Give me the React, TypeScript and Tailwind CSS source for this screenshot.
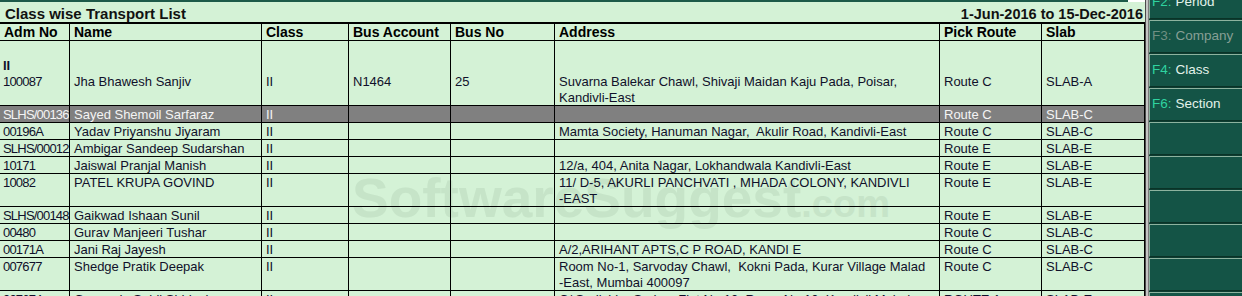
import type { ReactNode } from "react";

type Row = {
  adm: string;
  name: string;
  cls: string;
  account?: string;
  bus?: string;
  address?: string[];
  route: string;
  slab: string;
  selected?: boolean;
  group?: string;
};

const rows: Row[] = [
  {
    group: "II",
    adm: "100087",
    name: "Jha Bhawesh Sanjiv",
    cls: "II",
    account: "N1464",
    bus: "25",
    address: ["Suvarna Balekar Chawl, Shivaji Maidan Kaju Pada, Poisar,", "Kandivli-East"],
    route: "Route C",
    slab: "SLAB-A",
  },
  { adm: "SLHS/00136", name: "Sayed Shemoil Sarfaraz", cls: "II", route: "Route C", slab: "SLAB-C", selected: true },
  {
    adm: "00196A",
    name: "Yadav Priyanshu Jiyaram",
    cls: "II",
    address: ["Mamta Society, Hanuman Nagar,  Akulir Road, Kandivli-East"],
    route: "Route C",
    slab: "SLAB-C",
  },
  { adm: "SLHS/00012", name: "Ambigar Sandeep Sudarshan", cls: "II", route: "Route E", slab: "SLAB-E" },
  {
    adm: "10171",
    name: "Jaiswal Pranjal Manish",
    cls: "II",
    address: ["12/a, 404, Anita Nagar, Lokhandwala Kandivli-East"],
    route: "Route E",
    slab: "SLAB-E",
  },
  {
    adm: "10082",
    name: "PATEL KRUPA GOVIND",
    cls: "II",
    address: ["11/ D-5, AKURLI PANCHVATI , MHADA COLONY, KANDIVLI", "-EAST"],
    route: "Route E",
    slab: "SLAB-E",
  },
  { adm: "SLHS/00148", name: "Gaikwad Ishaan Sunil", cls: "II", route: "Route E", slab: "SLAB-E" },
  { adm: "00480", name: "Gurav Manjeeri Tushar", cls: "II", route: "Route C", slab: "SLAB-C" },
  {
    adm: "00171A",
    name: "Jani Raj Jayesh",
    cls: "II",
    address: ["A/2,ARIHANT APTS,C P ROAD, KANDI E"],
    route: "Route C",
    slab: "SLAB-C",
  },
  {
    adm: "007677",
    name: "Shedge Pratik Deepak",
    cls: "II",
    address: ["Room No-1, Sarvoday Chawl,  Kokni Pada, Kurar Village Malad", "-East, Mumbai 400097"],
    route: "Route C",
    slab: "SLAB-C",
  },
  {
    adm: "007674",
    name: "Gawande Sahil Siddesh",
    cls: "II",
    address: ["C/ Sadichha Sadan, Flat No 10, Room No 10, Kandivli Malad"],
    route: "ROUTE A",
    slab: "SLAB-E",
  },
];

const grid = "grid grid-cols-[70px_192px_87px_102px_104px_385px_102px_103px]";

const buttons = [
  { key: "F2", label: "Period" },
  { key: "F3", label: "Company", disabled: true },
  { key: "F4", label: "Class" },
  { key: "F6", label: "Section" },
  {},
  {},
  {},
  {},
  {},
  {},
];

function Cell({ children, adm }: { children?: ReactNode; adm?: boolean }) {
  return (
    <div
      className={`border-r border-black whitespace-pre overflow-hidden ${
        adm ? "px-[3px] tracking-[-0.8px]" : "px-[4px]"
      }`}
    >
      {children}
    </div>
  );
}

function Lines({ lines, lead }: { lines: (string | undefined)[]; lead?: ReactNode }) {
  return (
    <>
      {lead}
      {lines.map((l, i) => (
        <div key={i} className="h-[16px]">
          {l}
        </div>
      ))}
    </>
  );
}

function DataRow({ row }: { row: Row }) {
  const lead = row.group ? (
    <>
      <div className="h-[16px]" />
      <div className="h-[16px] font-bold tracking-normal">{row.group}</div>
    </>
  ) : null;
  const spacer = row.group ? <div className="h-[32px]" /> : null;
  return (
    <div
      className={`${grid} border-b border-black leading-[17px] ${
        row.selected ? "bg-[#808080] text-[#f4f4f4]" : "text-[#10102a]"
      }`}
    >
      <Cell adm>
        <Lines lines={[row.adm]} lead={lead} />
      </Cell>
      <Cell>
        <Lines lines={[row.name]} lead={spacer} />
      </Cell>
      <Cell>
        <Lines lines={[row.cls]} lead={spacer} />
      </Cell>
      <Cell>
        <Lines lines={[row.account]} lead={spacer} />
      </Cell>
      <Cell>
        <Lines lines={[row.bus]} lead={spacer} />
      </Cell>
      <Cell>
        <Lines lines={row.address ?? [""]} lead={spacer} />
      </Cell>
      <Cell>
        <Lines lines={[row.route]} lead={spacer} />
      </Cell>
      <Cell>
        <Lines lines={[row.slab]} lead={spacer} />
      </Cell>
    </div>
  );
}

export default function App() {
  const headers = ["Adm No", "Name", "Class", "Bus Account", "Bus No", "Address", "Pick Route", "Slab"];
  return (
    <div className="flex h-[296px] w-[1242px] overflow-hidden bg-[#d4f2d6] font-['Liberation_Sans',Arial,sans-serif] text-[13px]">
      <div className="relative h-[296px] w-[1145px] shrink-0 overflow-hidden">
        <div className="pointer-events-none absolute left-[352px] top-[171px] flex items-baseline font-bold leading-none text-[#c6e4c8]">
          <span className="text-[55px]">SoftwareSuggest</span>
          <span className="text-[38px]">.com</span>
        </div>
        <div className="relative">
          <div className="flex h-[2px] justify-end bg-[#1d5a49]">
            <div className="w-[17px] bg-white" />
          </div>
          <div className="flex h-[20px] items-end justify-between pl-[5px] pr-[2px] font-bold leading-[16px] text-[#111]">
            <span className="text-[15px]">Class wise Transport List</span>
            <span className="text-[14.5px]">1-Jun-2016 to 15-Dec-2016</span>
          </div>
          <div className={`${grid} border-t-2 border-b border-black text-[14px] font-bold leading-[16px] text-black`}>
            {headers.map((h) => (
              <div key={h} className="border-r border-black px-[4px] whitespace-nowrap overflow-hidden">
                {h}
              </div>
            ))}
          </div>
          {rows.map((r) => (
            <DataRow key={r.adm} row={r} />
          ))}
        </div>
      </div>
      <div className="w-[4px] shrink-0 border-l border-r border-l-[#4a4a4a] border-r-[#7a7a7a] bg-[#c4c4c4]" />
      <div className="-mt-[14px] flex w-[93px] shrink-0 flex-col gap-[1px] bg-[#0d3d31]">
        {buttons.map((b, i) => (
          <div
            key={i}
            className="flex h-[33px] shrink-0 items-center border-t border-l border-b border-t-[#8db39f] border-l-[#8db39f] border-b-[#0a3327] bg-[#145446] pl-[2px] text-[13.5px] whitespace-nowrap"
          >
            {b.key && (
              <>
                <span className={b.disabled ? "text-[#6f8f83]" : "text-[#2fd3a0]"}>{b.key}:</span>
                <span className={`ml-[4px] ${b.disabled ? "text-[#879f95]" : "text-[#e2f2ea]"}`}>{b.label}</span>
              </>
            )}
          </div>
        ))}
      </div>
    </div>
  );
}
